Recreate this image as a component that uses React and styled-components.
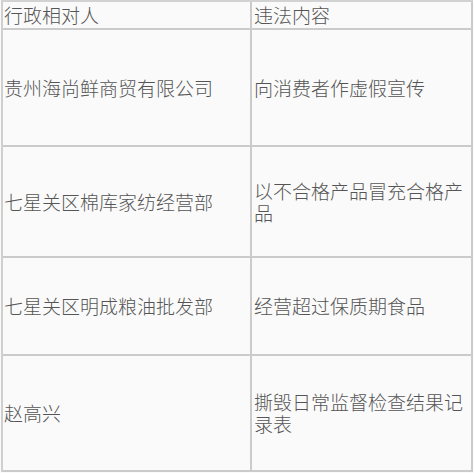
import React from "react";
import styled, { createGlobalStyle } from "styled-components";

const rows = [
  { name: "贵州海尚鲜商贸有限公司", content: "向消费者作虚假宣传", height: 117 },
  { name: "七星关区棉库家纺经营部", content: "以不合格产品冒充合格产品", height: 111 },
  { name: "七星关区明成粮油批发部", content: "经营超过保质期食品", height: 98 },
  { name: "赵高兴", content: "撕毁日常监督检查结果记录表", height: 116 },
];

function App() {
  return (
    <>
      <GlobalStyle />
      <StPage>
        <StTable>
          <StCell $height={28} $first>
            行政相对人
          </StCell>
          <StCell $height={28}>违法内容</StCell>
          {rows.map((row) => (
            <React.Fragment key={row.name}>
              <StCell $height={row.height} $first>
                {row.name}
              </StCell>
              <StCell $height={row.height}>{row.content}</StCell>
            </React.Fragment>
          ))}
        </StTable>
      </StPage>
    </>
  );
}

export default App;

const GlobalStyle = createGlobalStyle`
  * {
    box-sizing: border-box;
  }
  body {
    margin: 0;
    background: #fafafa;
    font-family: "Noto Sans CJK SC", "Liberation Sans", sans-serif;
  }
`;

const StPage = styled.div`
  width: 474px;
  height: 473px;
  background: #fafafa;
  padding-left: 1px;
  overflow: hidden;
`;

const StTable = styled.div`
  display: grid;
  grid-template-columns: 249px 221px;
  width: 472px;
  border-top: 2px solid #d2d2d2;
  border-left: 2px solid #cfcfcf;
`;

const StCell = styled.div`
  display: flex;
  align-items: center;
  height: ${(p) => p.$height}px;
  padding: 0 ${(p) => (p.$first ? "1px" : "2px")};
  border-right: 2px solid #cbcbcb;
  border-bottom: 2px solid #cbcbcb;
  font-size: 19px;
  font-weight: 300;
  line-height: 22px;
  color: #555555;
  word-break: break-all;
`;
